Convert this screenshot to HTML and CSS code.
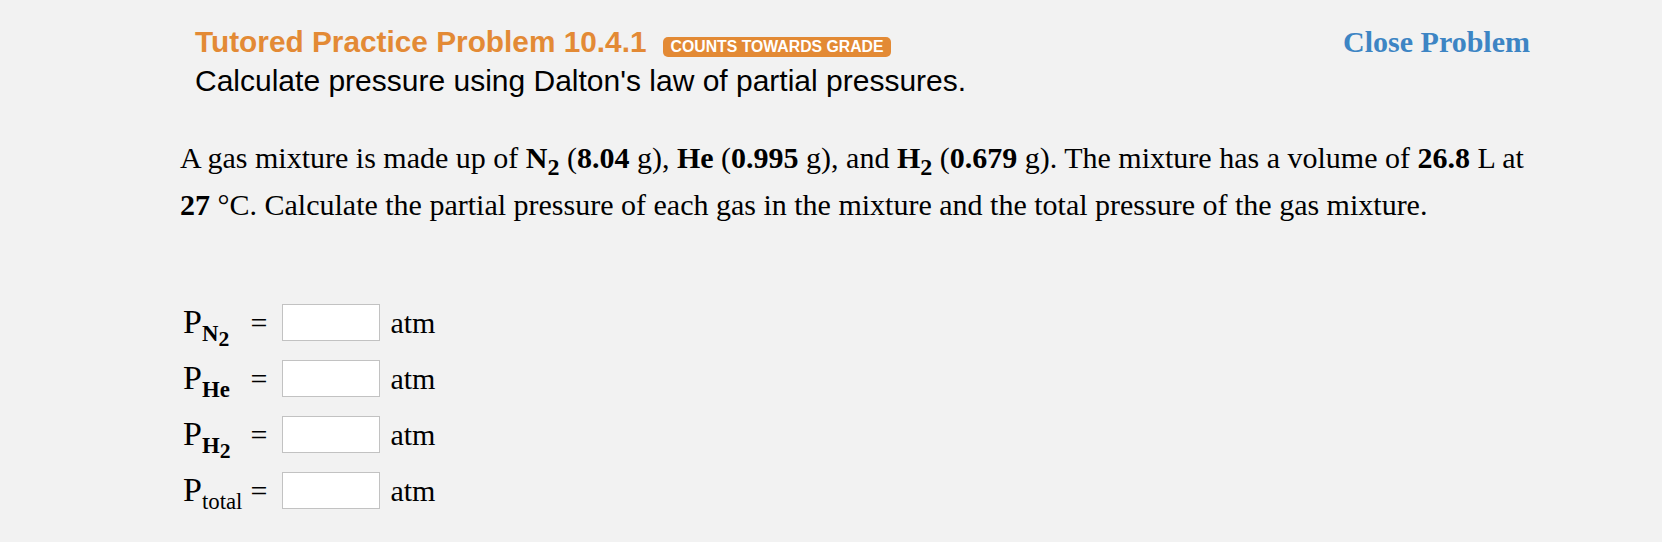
FILE: index.html
```html
<!DOCTYPE html>
<html lang="en">
<head>
<meta charset="utf-8">
<title>Tutored Practice Problem 10.4.1</title>
<link rel="stylesheet" href="styles.css">
</head>
<body>
<div class="page">
  <header class="head">
    <div class="titles">
      <div class="title-row">
        <span class="title">Tutored Practice Problem 10.4.1</span>
        <span class="badge">COUNTS TOWARDS GRADE</span>
      </div>
      <div class="subtitle">Calculate pressure using Dalton's law of partial pressures.</div>
    </div>
    <a class="close" href="#">Close Problem</a>
  </header>

  <p class="question">A gas mixture is made up of <b>N<sub>2</sub></b> (<b>8.04</b> g), <b>He</b> (<b>0.995</b> g), and <b>H<sub>2</sub></b> (<b>0.679</b> g). The mixture has a volume of <b>26.8</b> L at<br><b>27</b> °C. Calculate the partial pressure of each gas in the mixture and the total pressure of the gas mixture.</p>

  <div class="answers">
    <div class="label"><span class="p">P</span><span class="sub"><b>N<span class="subsub">2</span></b></span></div>
    <div class="eq">=</div>
    <input class="box" type="text">
    <div class="unit">atm</div>

    <div class="label"><span class="p">P</span><span class="sub"><b>He</b></span></div>
    <div class="eq">=</div>
    <input class="box" type="text">
    <div class="unit">atm</div>

    <div class="label"><span class="p">P</span><span class="sub"><b>H<span class="subsub">2</span></b></span></div>
    <div class="eq">=</div>
    <input class="box" type="text">
    <div class="unit">atm</div>

    <div class="label"><span class="p">P</span><span class="sub">total</span></div>
    <div class="eq">=</div>
    <input class="box" type="text">
    <div class="unit">atm</div>
  </div>
</div>
</body>
</html>
```

FILE: styles.css
```css
html, body {
  margin: 0;
  padding: 0;
  background: #f2f2f2;
}

.page {
  padding: 24px 132px 0 180px;
}

.head {
  display: flex;
  justify-content: space-between;
  align-items: flex-start;
  padding-left: 15px;
}

.title-row {
  display: flex;
  align-items: baseline;
  line-height: 36px;
}

.title {
  font-family: "Liberation Sans", Arial, sans-serif;
  font-weight: bold;
  font-size: 29.8px;
  color: #e38a35;
}

.badge {
  margin-left: 16px;
  font-family: "Liberation Sans", Arial, sans-serif;
  font-weight: bold;
  font-size: 15.8px;
  line-height: 20px;
  padding: 0 7px 0 8px;
  background: #e38a35;
  color: #fff;
  border-radius: 5px;
}

.subtitle {
  margin-top: 1px;
  font-family: "Liberation Sans", Arial, sans-serif;
  font-size: 30px;
  line-height: 39px;
  color: #000;
}

.close {
  font-family: "Liberation Serif", "Times New Roman", serif;
  font-weight: bold;
  font-size: 30px;
  line-height: 36px;
  color: #3d85c4;
  text-decoration: none;
}

.question {
  margin: 34px 0 0 0;
  font-family: "Liberation Serif", "Times New Roman", serif;
  font-size: 30px;
  line-height: 47px;
  color: #000;
  white-space: nowrap;
}

.question sub {
  font-size: 0.8em;
  line-height: 0;
  vertical-align: -0.28em;
}

.answers {
  margin: 76px 0 0 3px;
  display: grid;
  grid-template-columns: max-content max-content 98px max-content;
  grid-auto-rows: 37px;
  column-gap: 8px;
  row-gap: 19px;
  align-items: center;
  font-family: "Liberation Serif", "Times New Roman", serif;
  font-size: 30px;
  color: #000;
}

.label {
  line-height: 37px;
  white-space: nowrap;
}

.p {
  font-size: 34px;
  line-height: 1;
}

.sub {
  font-size: 0.76em;
  line-height: 0;
  vertical-align: -0.36em;
}

.subsub {
  font-size: 0.95em;
  line-height: 0;
  vertical-align: -0.22em;
}

.eq {
  line-height: 37px;
  margin-right: 7px;
}

.box {
  box-sizing: border-box;
  width: 98px;
  height: 37px;
  margin: 0;
  border: 1px solid #c2c2c2;
  background: #fff;
  padding: 0;
}

.unit {
  line-height: 37px;
  margin-left: 2px;
}
```
